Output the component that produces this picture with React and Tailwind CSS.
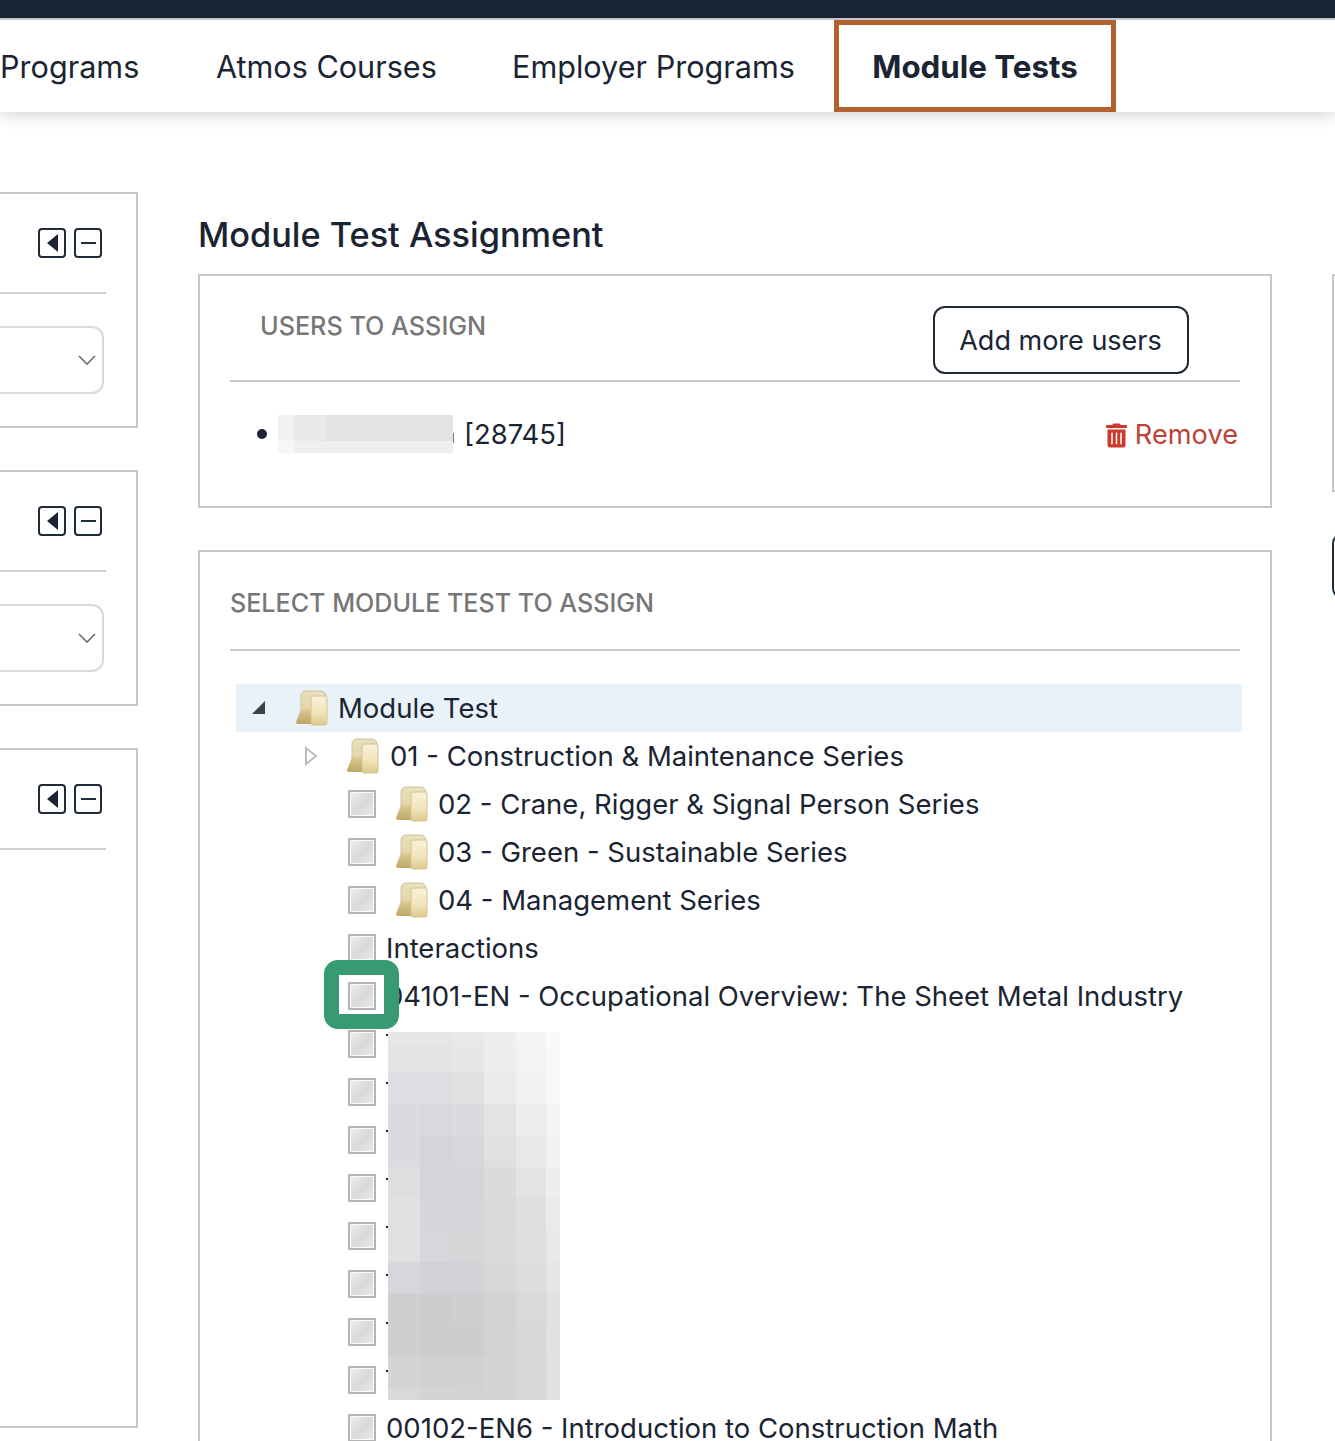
import React from "react";
import { FaTrashAlt } from "react-icons/fa";

const Folder = () => (
  <svg width="34" height="36" viewBox="0 0 34 36" className="shrink-0">
    <defs>
      <linearGradient id="fb" x1="0" y1="0" x2="0" y2="1">
        <stop offset="0" stopColor="#e9dfbe" />
        <stop offset="1" stopColor="#e0cf9a" />
      </linearGradient>
      <linearGradient id="ff" x1="0" y1="0" x2="0" y2="1">
        <stop offset="0" stopColor="#f7f1dc" />
        <stop offset="0.55" stopColor="#f1e5bc" />
        <stop offset="1" stopColor="#dfc98b" />
      </linearGradient>
      <linearGradient id="fl" x1="0" y1="0" x2="0" y2="1">
        <stop offset="0" stopColor="#dccb96" />
        <stop offset="1" stopColor="#bea665" />
      </linearGradient>
    </defs>
    <rect x="6" y="1" width="25" height="32" rx="5" fill="url(#fb)" stroke="#d0c197" strokeWidth="1" />
    <path d="M6 19 L1 32 Q1 34 3 34 H17 V19 Z" fill="url(#fl)" />
    <rect x="16" y="6" width="16" height="29" rx="2" fill="url(#ff)" stroke="#d5c28d" strokeWidth="1" />
  </svg>
);

const Check = () => (
  <div className="w-[28px] h-[28px] shrink-0 border-2 border-[#b5b5b5] bg-gradient-to-br from-[#f0f0f0] via-[#d8d8d8] to-[#ebebeb] shadow-[inset_0_0_0_1px_#f9f9f9]" />
);

const ICONBTN = "w-[28px] h-[30px] border-2 border-[#1f2937] rounded-[4px] flex items-center justify-center";

const SidePanel = ({ select, h }) => (
  <div className={`${h} border-y-2 border-r-2 border-[#c6c6c6] pt-[34px]`}>
    <div className="flex justify-end gap-[8px] pr-[34px]">
      <div className={ICONBTN}>
        <div className="w-0 h-0 border-y-[9px] border-y-transparent border-r-[11px] border-r-[#1a2433]" />
      </div>
      <div className={ICONBTN}>
        <div className="w-[15px] h-[2px] bg-[#1f2937]" />
      </div>
    </div>
    <div className="h-[2px] bg-[#cfcfcf] mr-[30px] mt-[34px]" />
    {select && (
      <div className="h-[68px] mt-[32px] mr-[32px] border-y-2 border-r-2 border-[#d9d9d9] rounded-r-[12px] flex items-center justify-end pr-[5px]">
        <svg width="20" height="12" viewBox="0 0 20 12" fill="none">
          <path d="M2 2 L10 10 L18 2" stroke="#6f6f6f" strokeWidth="1.6" />
        </svg>
      </div>
    )}
  </div>
);

const BLUR = [
  ["#e6e7e8", "#e6e7e8", "#e9e9e9", "#eeeeee", "#f4f4f4", "#fafafa"],
  ["#e3e4e6", "#e3e4e6", "#e7e7e7", "#eeeeee", "#f2f3f3", "#f9f9f9"],
  ["#dcdee1", "#dcdee1", "#e0e1e3", "#e9eaeb", "#f0f1f3", "#f7f8f8"],
  ["#d9dbde", "#d7d9dc", "#d9dbde", "#e2e3e5", "#ebecee", "#f4f4f5"],
  ["#d9dbde", "#d3d5d8", "#d5d7da", "#dee0e2", "#e7e8ea", "#f1f1f2"],
  ["#dedee0", "#d3d5d8", "#d3d5d8", "#d9dbdd", "#e2e3e4", "#eeeeef"],
  ["#e1e1e2", "#d5d6d9", "#d3d5d8", "#d8d9db", "#dfdfe0", "#eaeaeb"],
  ["#dfe0e2", "#d6d7da", "#d5d6d8", "#d9dadb", "#dedfe0", "#e8e8e9"],
  ["#d5d7da", "#d0d2d5", "#d2d3d6", "#d7d8d9", "#dcddde", "#e4e5e6"],
  ["#cdcfd1", "#cbcdcf", "#cdcfd1", "#d2d3d4", "#d8d9da", "#e2e2e3"],
  ["#cdcfd1", "#cbccce", "#cbcdcf", "#d1d2d4", "#d6d7d9", "#e1e1e3"],
  ["#d3d4d5", "#ced0d2", "#d0d1d2", "#d3d4d5", "#d6d7d8", "#dfe0e0"],
  ["#d9d9d9", "#d3d4d5", "#d2d3d3", "#d3d4d5", "#d8d8d9", "#e0e0e0"],
];

const Row = ({ children, className = "" }) => (
  <div className={`h-[48px] flex items-center ${className}`}>{children}</div>
);

const ITEMS = [
  "Interactions",
  "04101-EN - Occupational Overview: The Sheet Metal Industry",
  "",
  "",
  "",
  "",
  "",
  "",
  "",
  "",
  "00102-EN6 - Introduction to Construction Math",
];

export default function App() {
  return (
    <div
      className="w-[1335px] h-[1441px] overflow-hidden bg-white text-[#1a2433]"
      style={{ fontFamily: "Inter, 'Liberation Sans', sans-serif" }}
    >
      <div className="h-[18px] bg-[#1a2535]" />
      <div className="h-[94px] border-t-2 border-[#c3c7cc] bg-white shadow-[0_4px_14px_rgba(0,0,0,0.16)] relative flex items-center text-[30.6px]">
        <span className="w-[216px] mt-[2px]">Programs</span>
        <span className="w-[296px] mt-[2px]">Atmos Courses</span>
        <span className="w-[322px] mt-[2px]">Employer Programs</span>
        <div className="w-[282px] h-[92px] border-[5px] border-[#b1622f] font-bold text-[31.3px] flex items-center justify-center">
          <span className="mt-[2px]">Module Tests</span>
        </div>
      </div>

      <div className="flex items-start mt-[80px] gap-[60px]">
        <div className="w-[138px] shrink-0 flex flex-col gap-[42px]">
          <SidePanel select h="h-[236px]" />
          <SidePanel select h="h-[236px]" />
          <SidePanel h="h-[680px]" />
        </div>

        <div className="w-[1074px] shrink-0">
          <h1 className="h-[82px] pt-[21px] text-[34.3px] leading-[44px] font-medium">Module Test Assignment</h1>

          <div className="h-[234px] border-2 border-[#c6c6c6] px-[30px] pt-[30px]">
            <div className="flex justify-between h-[76px] border-b-2 border-[#c8c8c8]">
              <span className="ml-[30px] mt-[4px] text-[25.2px] leading-[32px] font-medium text-[#777777]">USERS TO ASSIGN</span>
              <div className="w-[256px] h-[68px] mr-[51px] border-2 border-[#1f2937] rounded-[12px] flex items-center justify-center text-[27px]">
                <span className="mt-[2px] mr-[1px]">Add more users</span>
              </div>
            </div>
            <div className="flex items-center justify-between mt-[33px] h-[38px] pr-[2px]">
              <div className="flex items-center">
                <div className="w-[10px] h-[10px] rounded-full bg-[#1a2433] ml-[27px]" />
                <div className="w-[175px] h-[38px] ml-[11px] flex flex-col">
                  <div className="flex h-[26px]">
                    <div className="w-[16px] bg-[#f1f1f1]" />
                    <div className="w-[32px] bg-[#e9e9e9]" />
                    <div className="flex-1 bg-[#e4e4e4]" />
                  </div>
                  <div className="flex-1 flex">
                    <div className="w-[16px] bg-[#f6f6f6]" />
                    <div className="flex-1 bg-[#efefef]" />
                  </div>
                </div>
                <div className="w-[1px] h-[10px] bg-[#777777] mt-[8px]" />
                <span className="ml-[10px] mt-[2px] text-[27.4px]">[28745]</span>
              </div>
              <div className="flex items-center gap-[8px] text-[#bd4238] text-[27.2px]">
                <FaTrashAlt className="text-[#cb3a2b] w-[21px] h-[25px] mt-[2px]" />
                <span className="mt-[2px]">Remove</span>
              </div>
            </div>
          </div>

          <div className="mt-[42px] border-2 border-[#c6c6c6] px-[30px] pt-[36px] h-[1000px]">
            <div className="h-[30px] text-[25.1px] leading-[30px] font-medium text-[#777777]">SELECT MODULE TEST TO ASSIGN</div>
            <div className="h-[2px] bg-[#c8c8c8] mt-[31px]" />
            <div className="relative mt-[33px] ml-[6px] text-[27.5px]">
              <Row className="bg-[#e8f2f8] w-[1006px]">
                <div className="ml-[16px] w-0 h-0 border-l-[13px] border-l-transparent border-b-[13px] border-b-[#3a424d] mb-[2px]" />
                <div className="ml-[30px]"><Folder /></div>
                <span className="ml-[9px] mt-[2px]">Module Test</span>
              </Row>
              <Row>
                <svg width="14" height="20" viewBox="0 0 14 20" className="ml-[68px] shrink-0">
                  <path d="M2 2 L12 10 L2 18 Z" fill="#fff" stroke="#b9bdc2" strokeWidth="2" />
                </svg>
                <div className="ml-[28px]"><Folder /></div>
                <span className="ml-[10px] mt-[2px]">01 - Construction &amp; Maintenance Series</span>
              </Row>
              {["02 - Crane, Rigger & Signal Person Series", "03 - Green - Sustainable Series", "04 - Management Series"].map((t) => (
                <Row key={t}>
                  <div className="ml-[112px]"><Check /></div>
                  <div className="ml-[19px]"><Folder /></div>
                  <span className="ml-[9px] mt-[2px]">{t}</span>
                </Row>
              ))}
              {ITEMS.map((t, i) => (
                <Row key={i}>
                  <div className="ml-[112px]"><Check /></div>
                  {t ? (
                    <span className="ml-[10px] mt-[2px]">{t}</span>
                  ) : (
                    <div className="ml-[10px] mb-[18px] w-[2px] h-[2px] bg-[#1a2433]" />
                  )}
                </Row>
              ))}

              <div className="absolute left-[88px] top-[276px] w-[75px] h-[69px] border-[15px] border-[#379a72] rounded-[14px]" />
              <div className="absolute left-[152px] top-[348px] w-[172px] flex flex-col">
                {BLUR.map((r, i) => (
                  <div
                    key={i}
                    className="flex"
                    style={{ height: [10, 30, 32, 32, 31, 31, 32, 32, 31, 32, 31, 32, 12][i] }}
                  >
                    {r.map((c, j) => (
                      <div key={j} style={{ background: c, width: [32, 32, 32, 32, 30, 14][j] }} />
                    ))}
                  </div>
                ))}
              </div>
            </div>
          </div>
        </div>

        <div className="w-[100px] shrink-0 pt-[82px]">
          <div className="h-[218px] border-2 border-[#c6c6c6]" />
          <div className="h-[68px] mt-[40px] border-2 border-[#1f2937] rounded-[12px]" />
        </div>
      </div>
    </div>
  );
}
